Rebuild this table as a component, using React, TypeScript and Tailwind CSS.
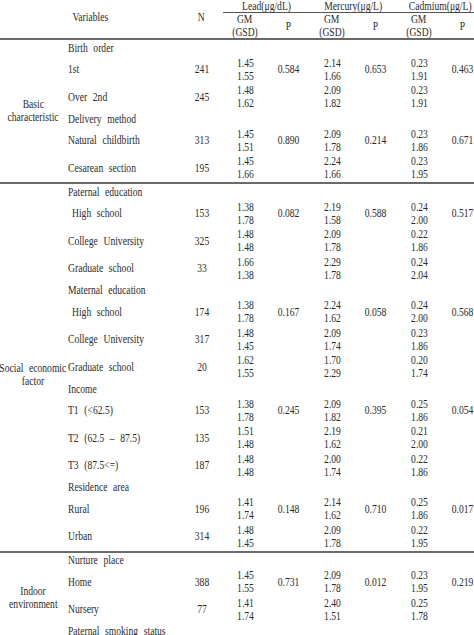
import type { ReactNode } from "react";

type Row =
  | { kind: "head"; label: string }
  | {
      kind: "data";
      label: string;
      indent?: boolean;
      n: string;
      lead: [string, string];
      leadP?: string;
      hg: [string, string];
      hgP?: string;
      cd: [string, string];
      cdP?: string;
    };

type Section = { label: string[]; pad: string; rows: Row[] };

const sections: Section[] = [
  {
    label: ["Basic", "characteristic"],
    pad: "justify-center",
    rows: [
      { kind: "head", label: "Birth order" },
      { kind: "data", label: "1st", n: "241", lead: ["1.45", "1.55"], leadP: "0.584", hg: ["2.14", "1.66"], hgP: "0.653", cd: ["0.23", "1.91"], cdP: "0.463" },
      { kind: "data", label: "Over 2nd", n: "245", lead: ["1.48", "1.62"], hg: ["2.09", "1.82"], cd: ["0.23", "1.91"] },
      { kind: "head", label: "Delivery method" },
      { kind: "data", label: "Natural childbirth", n: "313", lead: ["1.45", "1.51"], leadP: "0.890", hg: ["2.09", "1.78"], hgP: "0.214", cd: ["0.23", "1.86"], cdP: "0.671" },
      { kind: "data", label: "Cesarean section", n: "195", lead: ["1.45", "1.66"], hg: ["2.24", "1.66"], cd: ["0.23", "1.95"] },
    ],
  },
  {
    label: ["Social economic", "factor"],
    pad: "justify-center pt-[16px]",
    rows: [
      { kind: "head", label: "Paternal education" },
      { kind: "data", label: "High school", indent: true, n: "153", lead: ["1.38", "1.78"], leadP: "0.082", hg: ["2.19", "1.58"], hgP: "0.588", cd: ["0.24", "2.00"], cdP: "0.517" },
      { kind: "data", label: "College University", n: "325", lead: ["1.48", "1.48"], hg: ["2.09", "1.78"], cd: ["0.22", "1.86"] },
      { kind: "data", label: "Graduate school", n: "33", lead: ["1.66", "1.38"], hg: ["2.29", "1.78"], cd: ["0.24", "2.04"] },
      { kind: "head", label: "Maternal education" },
      { kind: "data", label: "High school", indent: true, n: "174", lead: ["1.38", "1.78"], leadP: "0.167", hg: ["2.24", "1.62"], hgP: "0.058", cd: ["0.24", "2.00"], cdP: "0.568" },
      { kind: "data", label: "College University", n: "317", lead: ["1.48", "1.45"], hg: ["2.09", "1.74"], cd: ["0.23", "1.86"] },
      { kind: "data", label: "Graduate school", n: "20", lead: ["1.62", "1.55"], hg: ["1.70", "2.29"], cd: ["0.20", "1.74"] },
      { kind: "head", label: "Income" },
      { kind: "data", label: "T1 (<62.5)", n: "153", lead: ["1.38", "1.78"], leadP: "0.245", hg: ["2.09", "1.82"], hgP: "0.395", cd: ["0.25", "1.86"], cdP: "0.054" },
      { kind: "data", label: "T2 (62.5 – 87.5)", n: "135", lead: ["1.51", "1.48"], hg: ["2.19", "1.62"], cd: ["0.21", "2.00"] },
      { kind: "data", label: "T3 (87.5<=)", n: "187", lead: ["1.48", "1.48"], hg: ["2.00", "1.74"], cd: ["0.22", "1.86"] },
      { kind: "head", label: "Residence area" },
      { kind: "data", label: "Rural", n: "196", lead: ["1.41", "1.74"], leadP: "0.148", hg: ["2.14", "1.62"], hgP: "0.710", cd: ["0.25", "1.86"], cdP: "0.017" },
      { kind: "data", label: "Urban", n: "314", lead: ["1.48", "1.45"], hg: ["2.09", "1.78"], cd: ["0.22", "1.95"] },
    ],
  },
  {
    label: ["Indoor", "environment"],
    pad: "pt-[32px]",
    rows: [
      { kind: "head", label: "Nurture place" },
      { kind: "data", label: "Home", n: "388", lead: ["1.45", "1.55"], leadP: "0.731", hg: ["2.09", "1.78"], hgP: "0.012", cd: ["0.23", "1.95"], cdP: "0.219" },
      { kind: "data", label: "Nursery", n: "77", lead: ["1.41", "1.74"], hg: ["2.40", "1.51"], cd: ["0.25", "1.78"] },
      { kind: "head", label: "Paternal smoking status" },
    ],
  },
];

// the scan is squeezed sideways, so every text run is narrowed a bit
const T = ({ children, left }: { children: ReactNode; left?: boolean }) => (
  <span className={`inline-block whitespace-nowrap scale-x-80 [word-spacing:4px] ${left ? "origin-left" : "origin-center"}`}>
    {children}
  </span>
);

const Pair = ({ v }: { v: [string, string] }) => (
  <div className="w-[44px] flex flex-col items-center">
    <T>{v[0]}</T>
    <T>{v[1]}</T>
  </div>
);

const PCell = ({ p }: { p?: string }) => (
  <div className="w-[43px] flex justify-center">{p && <T>{p}</T>}</div>
);

const TableRow = ({ row }: { row: Row }) => {
  if (row.kind === "head") {
    return (
      <div className="h-[16px] flex items-center pl-[2px]">
        <T left>{row.label}</T>
      </div>
    );
  }
  return (
    <div className="h-[27.5px] flex items-center">
      <div className={`w-[114px] ${row.indent ? "pl-[6px]" : "pl-[2px]"}`}>
        <T left>{row.label}</T>
      </div>
      <div className="w-[43px] flex justify-center">
        <T>{row.n}</T>
      </div>
      <Pair v={row.lead} />
      <PCell p={row.leadP} />
      <Pair v={row.hg} />
      <PCell p={row.hgP} />
      <Pair v={row.cd} />
      <PCell p={row.cdP} />
    </div>
  );
};

export default function App() {
  return (
    <div className="w-[474px] h-[635px] overflow-hidden bg-white text-[#2b2b2b] text-[12px] leading-[13px] font-['Liberation_Serif','Times_New_Roman',serif]">
      <div className="w-[486px]">
        {/* header */}
        <div className="flex border-b-2 border-[#6a6a6a]">
          <div className="w-[180px] flex items-center justify-center pb-[3px]">
            <T>Variables</T>
          </div>
          <div className="w-[43px] flex items-center justify-center pb-[3px]">
            <T>N</T>
          </div>
          {["Lead(μg/dL)", "Mercury(μg/L)", "Cadmium(μg/L)"].map((g) => (
            <div key={g} className="w-[87px] flex flex-col">
              <div className="h-[13px] flex items-center justify-center border-b border-[#555]">
                <T>{g}</T>
              </div>
              <div className="h-[25px] flex pt-[1px]">
                <div className="w-[44px] flex flex-col items-center justify-center">
                  <T>GM</T>
                  <T>(GSD)</T>
                </div>
                <div className="w-[43px] flex items-center justify-center">
                  <T>P</T>
                </div>
              </div>
            </div>
          ))}
        </div>

        {/* body */}
        {sections.map((s) => (
          <div key={s.label.join(" ")} className="flex border-b-2 border-[#6a6a6a]">
            <div className={`w-[66px] flex flex-col items-center ${s.pad}`}>
              {s.label.map((l) => (
                <T key={l}>{l}</T>
              ))}
            </div>
            <div className="flex flex-col">
              {s.rows.map((r, i) => (
                <TableRow key={i} row={r} />
              ))}
            </div>
          </div>
        ))}
      </div>
    </div>
  );
}
